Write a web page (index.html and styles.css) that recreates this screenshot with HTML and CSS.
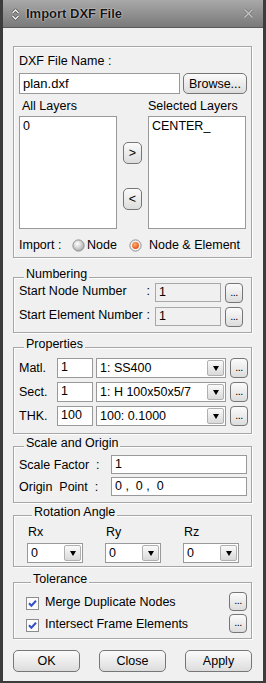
FILE: index.html
```html
<!DOCTYPE html>
<html>
<head>
<meta charset="utf-8">
<link rel="stylesheet" href="styles.css">
</head>
<body>
<div class="window">
  <div class="titlebar">
    <svg class="t-icon" width="9" height="13" viewBox="0 0 9 13">
      <polyline points="1.5,5 4.5,2 7.5,5" fill="none" stroke="#555" stroke-width="3" stroke-linejoin="round"/>
      <polyline points="1.5,8 4.5,11 7.5,8" fill="none" stroke="#555" stroke-width="3" stroke-linejoin="round"/>
      <polyline points="1.5,5 4.5,2 7.5,5" fill="none" stroke="#f2f2f2" stroke-width="1.4"/>
      <polyline points="1.5,8 4.5,11 7.5,8" fill="none" stroke="#f2f2f2" stroke-width="1.4"/>
    </svg>
    <span class="t-text">Import DXF File</span>
    <svg class="t-close" width="11" height="11" viewBox="0 0 11 11">
      <path d="M1.5 1.5 L9.5 9.5 M9.5 1.5 L1.5 9.5" stroke="#7a7a7a" stroke-width="3"/>
      <path d="M1.5 1.5 L9.5 9.5 M9.5 1.5 L1.5 9.5" stroke="#c4c4c4" stroke-width="1.3"/>
    </svg>
  </div>

  <div class="content">
    <div class="group g-file">
      <div class="lbl">DXF File Name :</div>
      <div class="file-row">
        <div class="field file-field">plan.dxf</div>
        <div class="btn browse">Browse...</div>
      </div>
      <div class="layer-labels">
        <span class="all-lbl">All Layers</span>
        <span class="sel-lbl">Selected Layers</span>
      </div>
      <div class="layers">
        <div class="list">0</div>
        <div class="movers">
          <div class="btn mover">&gt;</div>
          <div class="btn mover">&lt;</div>
        </div>
        <div class="list">CENTER_</div>
      </div>
      <div class="import-row">
        <span class="imp-lbl">Import :</span>
        <svg class="radio" width="13" height="13" viewBox="0 0 13 13">
          <defs>
            <radialGradient id="rg1" cx="0.4" cy="0.35" r="0.7">
              <stop offset="0" stop-color="#ffffff"/>
              <stop offset="1" stop-color="#a9a9a9"/>
            </radialGradient>
          </defs>
          <circle cx="6.5" cy="6.5" r="5.6" fill="url(#rg1)" stroke="#8e8e8e" stroke-width="1"/>
        </svg>
        <span class="r-node">Node</span>
        <svg class="radio" width="13" height="13" viewBox="0 0 13 13">
          <defs>
            <radialGradient id="rg2" cx="0.4" cy="0.35" r="0.7">
              <stop offset="0" stop-color="#ffb070"/>
              <stop offset="1" stop-color="#e8480e"/>
            </radialGradient>
          </defs>
          <circle cx="6.5" cy="6.5" r="5.6" fill="#f4f4f4" stroke="#8e8e8e" stroke-width="1"/>
          <circle cx="6.5" cy="6.5" r="3.4" fill="url(#rg2)"/>
        </svg>
        <span class="r-elem">Node &amp; Element</span>
      </div>
    </div>

    <div class="group g-num">
      <div class="legend">Numbering</div>
      <div class="num-row">
        <div class="num-lbl"><span>Start Node Number</span><span>:</span></div>
        <div class="field dis num-field">1</div>
        <div class="btn dots">...</div>
      </div>
      <div class="num-row second">
        <div class="num-lbl"><span>Start Element Number</span><span>:</span></div>
        <div class="field dis num-field">1</div>
        <div class="btn dots">...</div>
      </div>
    </div>

    <div class="group g-prop">
      <div class="legend">Properties</div>
      <div class="prop-row">
        <span class="prop-lbl">Matl.</span>
        <div class="field prop-id">1</div>
        <div class="combo prop-combo"><span class="c-text">1: SS400</span><span class="c-arrow"><i></i></span></div>
        <div class="btn dots">...</div>
      </div>
      <div class="prop-row">
        <span class="prop-lbl">Sect.</span>
        <div class="field prop-id">1</div>
        <div class="combo prop-combo"><span class="c-text">1: H 100x50x5/7</span><span class="c-arrow"><i></i></span></div>
        <div class="btn dots">...</div>
      </div>
      <div class="prop-row">
        <span class="prop-lbl">THK.</span>
        <div class="field prop-id">100</div>
        <div class="combo prop-combo"><span class="c-text">100: 0.1000</span><span class="c-arrow"><i></i></span></div>
        <div class="btn dots">...</div>
      </div>
    </div>

    <div class="group g-scale">
      <div class="legend">Scale and Origin</div>
      <div class="sc-row">
        <span class="sc-lbl">Scale Factor&nbsp; :</span>
        <div class="field sc-field">1</div>
      </div>
      <div class="sc-row second">
        <span class="sc-lbl">Origin&nbsp; Point&nbsp; :</span>
        <div class="field sc-field">0 ,&nbsp; 0 ,&nbsp; 0</div>
      </div>
    </div>

    <div class="group g-rot">
      <div class="legend">Rotation Angle</div>
      <div class="rot-grid">
        <span class="rot-lbl">Rx</span>
        <span class="rot-lbl">Ry</span>
        <span class="rot-lbl">Rz</span>
        <div class="combo rot-combo"><span class="c-text">0</span><span class="c-arrow"><i></i></span></div>
        <div class="combo rot-combo"><span class="c-text">0</span><span class="c-arrow"><i></i></span></div>
        <div class="combo rot-combo"><span class="c-text">0</span><span class="c-arrow"><i></i></span></div>
      </div>
    </div>

    <div class="group g-tol">
      <div class="legend">Tolerance</div>
      <div class="tol-row">
        <svg class="chk" width="13" height="13" viewBox="0 0 13 13">
          <rect x="0.5" y="0.5" width="12" height="12" fill="#fbfbfb" stroke="#8c8c8c"/>
          <path d="M3 6.3 L5.4 8.8 L10 3.8" fill="none" stroke="#3350c8" stroke-width="2"/>
        </svg>
        <span class="tol-text">Merge Duplicate Nodes</span>
        <div class="btn dots tol-dots">...</div>
      </div>
      <div class="tol-row second">
        <svg class="chk" width="13" height="13" viewBox="0 0 13 13">
          <rect x="0.5" y="0.5" width="12" height="12" fill="#fbfbfb" stroke="#8c8c8c"/>
          <path d="M3 6.3 L5.4 8.8 L10 3.8" fill="none" stroke="#3350c8" stroke-width="2"/>
        </svg>
        <span class="tol-text">Intersect Frame Elements</span>
        <div class="btn dots tol-dots">...</div>
      </div>
    </div>

    <div class="actions">
      <div class="btn act">OK</div>
      <div class="btn act">Close</div>
      <div class="btn act">Apply</div>
    </div>
  </div>
</div>
</body>
</html>
```

FILE: styles.css
```css
html, body {
  margin: 0;
  padding: 0;
  background: #3a3a3a;
}
body {
  width: 266px;
  height: 683px;
  overflow: hidden;
  font-family: "Liberation Sans", Arial, sans-serif;
  font-size: 12.5px;
  line-height: 14px;
  color: #000;
}
.window {
  width: 266px;
  height: 683px;
  box-sizing: border-box;
  border-left: 3px solid #3c3c3c;
  border-right: 3px solid #3c3c3c;
  border-bottom: 2px solid #3c3c3c;
  background: #f0f0f0;
  display: flex;
  flex-direction: column;
}
.titlebar {
  height: 28px;
  box-sizing: border-box;
  background: linear-gradient(#a9a9a9, #8e8e8e 55%, #7a7a7a);
  border-bottom: 1px solid #5a5a5a;
  display: flex;
  align-items: center;
  padding-left: 8px;
}
.t-icon {
  display: block;
  margin-top: 1px;
}
.t-text {
  margin-left: 6px;
  font-weight: bold;
  font-size: 13px;
  color: #161616;
  text-shadow: 0 0 2px #d8d8d8, 0 0 1px #e8e8e8;
}
.t-close {
  display: block;
  margin-left: auto;
  margin-right: 9px;
}
.content {
  padding: 0 11px 0 10px;
  display: flex;
  flex-direction: column;
}
.group {
  border: 1px solid #a6a6a6;
  box-shadow: inset 1px 1px 0 #fdfdfd, 1px 1px 0 #fdfdfd;
  display: flex;
  flex-direction: column;
}
.legend {
  height: 14px;
  margin: -11px 0 0 5px;
  padding: 0 2px;
  background: #f0f0f0;
  align-self: flex-start;
  white-space: nowrap;
}
.field {
  box-sizing: border-box;
  border: 1px solid #999;
  background: #fff;
  padding: 0 0 0 3px;
  white-space: nowrap;
  overflow: hidden;
}
.field.dis {
  background: #f0f0f0;
  border-color: #a8a8a8;
}
.btn {
  box-sizing: border-box;
  border: 1px solid #767676;
  border-radius: 5px;
  background: linear-gradient(#fbfbfb, #ececec 50%, #dcdcdc);
  display: flex;
  align-items: center;
  justify-content: center;
  white-space: nowrap;
}
.dots {
  width: 18px;
  height: 20px;
  font-size: 11px;
  align-items: flex-end;
  padding-bottom: 3px;
  letter-spacing: -0.5px;
  border-radius: 4px;
}
.combo {
  box-sizing: border-box;
  border: 1px solid #999;
  background: #fff;
  display: flex;
  height: 20px;
}
.c-text {
  flex: 1;
  padding-left: 3px;
  line-height: 18px;
  white-space: nowrap;
  overflow: hidden;
}
.c-arrow {
  width: 17px;
  margin: 1px;
  box-sizing: border-box;
  border: 1px solid #b0b0b0;
  border-radius: 2px;
  background: linear-gradient(#fafafa, #d9d9d9);
  display: flex;
  align-items: center;
  justify-content: center;
}
.c-arrow i {
  display: block;
  width: 0;
  height: 0;
  border-left: 3.5px solid transparent;
  border-right: 3.5px solid transparent;
  border-top: 5px solid #000;
  margin-top: 1px;
}

/* group 1 */
.g-file {
  margin-top: 18px;
  padding: 7px 3px 5px 5px;
}
.file-row {
  display: flex;
  margin-top: 5px;
  height: 21px;
}
.file-field {
  width: 161px;
  line-height: 19px;
  font-size: 13px;
}
.browse {
  width: 64px;
  margin-left: 3px;
  height: 21px;
}
.layer-labels {
  margin-top: 5px;
  display: flex;
  height: 14px;
}
.all-lbl {
  margin-left: 3px;
  width: 126px;
}
.layers {
  margin-top: 3px;
  display: flex;
  gap: 6px;
  height: 113px;
}
.list {
  width: 98px;
  height: 113px;
  box-sizing: border-box;
  border: 1px solid #999;
  background: #fff;
  padding: 2px 0 0 3px;
}
.movers {
  width: 19px;
  display: flex;
  flex-direction: column;
  padding-top: 26px;
  gap: 24px;
}
.mover {
  height: 22px;
  width: 19px;
}
.import-row {
  margin-top: 9px;
  display: flex;
  align-items: center;
  height: 14px;
}
.imp-lbl { width: 53px; }
.radio { display: block; }
.r-node { margin-left: 2px; width: 42px; }
.r-elem { margin-left: 7px; }

/* numbering */
.g-num {
  margin-top: 19px;
  padding: 0 3px 5px 5px;
}
.num-row {
  display: flex;
  align-items: flex-start;
  margin-top: 2px;
  height: 20px;
}
.num-row.second { margin-top: 4px; }
.num-lbl {
  width: 136px;
  padding-right: 5px;
  box-sizing: border-box;
  display: flex;
  justify-content: space-between;
  padding-top: 1px;
}
.num-field {
  width: 66px;
  height: 19px;
  line-height: 17px;
}
.g-num .dots { margin-left: 4px; }

/* properties */
.g-prop {
  margin-top: 14px;
  padding: 0 3px 7px 5px;
}
.prop-row {
  display: flex;
  align-items: center;
  margin-top: 4px;
  height: 20px;
}
.prop-row:nth-child(2) { margin-top: 7px; }
.prop-lbl { width: 38px; }
.prop-id {
  width: 36px;
  height: 20px;
  line-height: 16px;
}
.prop-combo {
  width: 130px;
  margin-left: 3px;
}
.g-prop .dots { margin-left: 4px; }

/* scale */
.g-scale {
  margin-top: 12px;
  padding: 0 4px 6px 5px;
}
.sc-row {
  display: flex;
  align-items: center;
  margin-top: 5px;
  height: 19px;
}
.sc-row.second { margin-top: 3px; }
.sc-lbl { width: 92px; white-space: nowrap; }
.sc-field {
  flex: 1;
  height: 19px;
  line-height: 17px;
}

/* rotation */
.g-rot {
  margin-top: 12px;
  padding: 0 3px 3px 13px;
}
.rot-grid {
  margin-top: 6px;
  display: grid;
  grid-template-columns: 56px 56px 56px;
  column-gap: 22px;
  row-gap: 4px;
}
.rot-lbl { height: 14px; padding-left: 1px; }
.rot-combo { width: 56px; }

/* tolerance */
.g-tol {
  margin-top: 15px;
  padding: 0 4px 5px 12px;
}
.tol-row {
  display: flex;
  align-items: center;
  margin-top: 6px;
  height: 19px;
}
.tol-row.second { margin-top: 3px; }
.chk { display: block; margin-top: 4px; }
.tol-text { margin-left: 6px; padding-top: 1px; }
.tol-dots { margin-left: auto; height: 19px; }

/* actions */
.actions {
  margin-top: 11px;
  display: flex;
  justify-content: space-between;
}
.act {
  width: 67px;
  height: 22px;
}
```
